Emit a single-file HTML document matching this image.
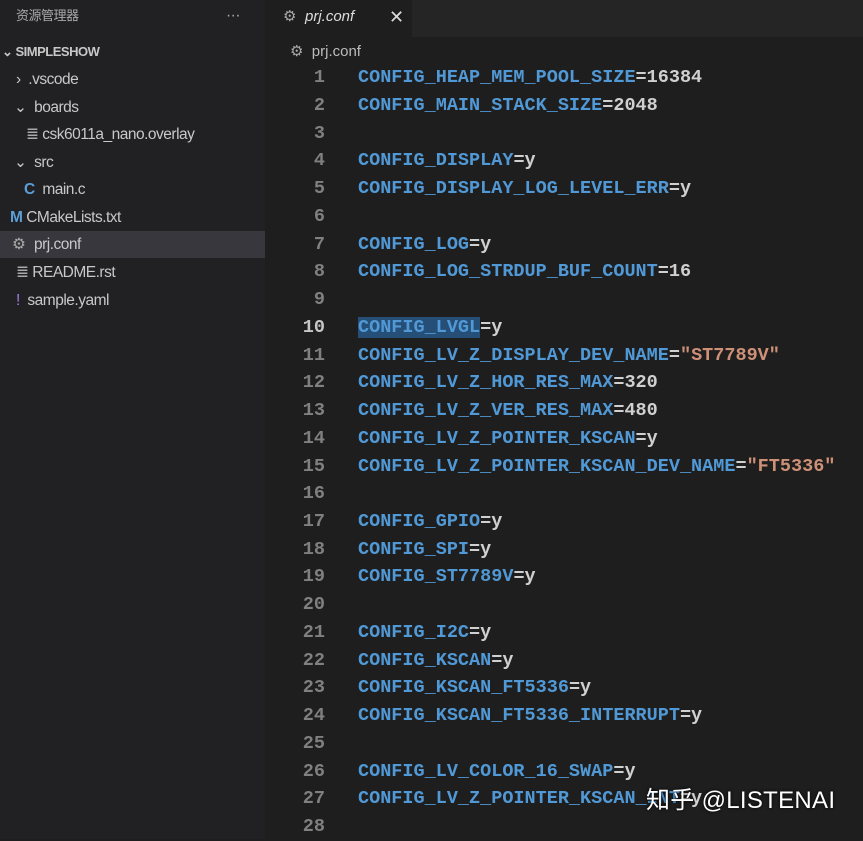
<!DOCTYPE html><html><head><meta charset="utf-8"><style>
body{margin:0;width:863px;height:839px;background:#1e1e1e;overflow:hidden;font-family:"Liberation Sans","Noto Sans CJK SC",sans-serif;position:relative}
#side{position:absolute;left:0;top:0;width:265px;height:839px;background:#212123}
.s{position:absolute;left:0;width:265px;height:27px;line-height:27px;color:#c8c8c8;font-size:15.5px;letter-spacing:-0.5px;white-space:nowrap}
#tabs{position:absolute;left:265px;top:0;width:598px;height:37px;background:#252526}
#tab{position:absolute;left:265px;top:0;width:147px;height:37px;background:#1e1e1e;color:#ddd;font-style:italic;font-size:15px;line-height:34px}
.l{position:absolute;left:280px;height:28px;line-height:28px;font-family:"Liberation Mono",monospace;font-size:18.5px;white-space:pre;color:#d0d0d0;font-weight:bold}
.n{display:inline-block;width:45px;text-align:right;color:#808080;margin-right:33px}
.k{color:#5199d6}.v{color:#ce9178}
</style></head><body>
<div id="side">
<div class="s" style="top:2px;left:16px;font-size:13px;color:#aaa">资源管理器</div>
<div class="s" style="top:2px;left:226px;color:#aaa">···</div>
<div class="s" style="top:38px;left:2px;font-weight:bold;font-size:13px">⌄ SIMPLESHOW</div>
<div class="s" style="top:66px;left:16px">›&nbsp; .vscode</div>
<div class="s" style="top:94px;left:14px">⌄&nbsp; boards</div>
<div class="s" style="top:121px;left:26px"><span style="color:#aaa">≣</span> csk6011a_nano.overlay</div>
<div class="s" style="top:149px;left:14px">⌄&nbsp; src</div>
<div class="s" style="top:176px;left:24px"><b style="color:#5a9fd8">C</b>&nbsp; main.c</div>
<div class="s" style="top:204px;left:10px"><b style="color:#5a9fd8">M</b> CMakeLists.txt</div>
<div class="s" style="top:231px;background:#37373d"><span style="position:absolute;left:12px;color:#aaa">⚙</span><span style="position:absolute;left:34px">prj.conf</span></div>
<div class="s" style="top:259px;left:16px"><span style="color:#aaa">≣</span> README.rst</div>
<div class="s" style="top:287px;left:16px"><span style="color:#a07de0">!</span>&nbsp; sample.yaml</div>
</div>
<div id="tabs"></div>
<div id="tab"><span style="position:absolute;left:18px;font-style:normal;color:#aaa">⚙</span><span style="position:absolute;left:40px">prj.conf</span><span style="position:absolute;left:124px;font-style:normal;font-size:18px">✕</span></div>
<div style="position:absolute;left:290px;top:40px;color:#bbb;font-size:15px;line-height:24px"><span style="color:#aaa">⚙</span>&nbsp; prj.conf</div>
<div id="code">
<div class="l" style="top:64px"><span class="n">1</span><span class="k">CONFIG_HEAP_MEM_POOL_SIZE</span>=16384</div>
<div class="l" style="top:92px"><span class="n">2</span><span class="k">CONFIG_MAIN_STACK_SIZE</span>=2048</div>
<div class="l" style="top:120px"><span class="n">3</span></div>
<div class="l" style="top:147px"><span class="n">4</span><span class="k">CONFIG_DISPLAY</span>=y</div>
<div class="l" style="top:175px"><span class="n">5</span><span class="k">CONFIG_DISPLAY_LOG_LEVEL_ERR</span>=y</div>
<div class="l" style="top:203px"><span class="n">6</span></div>
<div class="l" style="top:231px"><span class="n">7</span><span class="k">CONFIG_LOG</span>=y</div>
<div class="l" style="top:258px"><span class="n">8</span><span class="k">CONFIG_LOG_STRDUP_BUF_COUNT</span>=16</div>
<div class="l" style="top:286px"><span class="n">9</span></div>
<div class="l" style="top:314px"><span class="n" style="color:#c6c6c6">10</span><span class="k" style="background:#264f78">CONFIG_LVGL</span>=y</div>
<div class="l" style="top:342px"><span class="n">11</span><span class="k">CONFIG_LV_Z_DISPLAY_DEV_NAME</span>=<span class="v">"ST7789V"</span></div>
<div class="l" style="top:369px"><span class="n">12</span><span class="k">CONFIG_LV_Z_HOR_RES_MAX</span>=320</div>
<div class="l" style="top:397px"><span class="n">13</span><span class="k">CONFIG_LV_Z_VER_RES_MAX</span>=480</div>
<div class="l" style="top:425px"><span class="n">14</span><span class="k">CONFIG_LV_Z_POINTER_KSCAN</span>=y</div>
<div class="l" style="top:453px"><span class="n">15</span><span class="k">CONFIG_LV_Z_POINTER_KSCAN_DEV_NAME</span>=<span class="v">"FT5336"</span></div>
<div class="l" style="top:480px"><span class="n">16</span></div>
<div class="l" style="top:508px"><span class="n">17</span><span class="k">CONFIG_GPIO</span>=y</div>
<div class="l" style="top:536px"><span class="n">18</span><span class="k">CONFIG_SPI</span>=y</div>
<div class="l" style="top:563px"><span class="n">19</span><span class="k">CONFIG_ST7789V</span>=y</div>
<div class="l" style="top:591px"><span class="n">20</span></div>
<div class="l" style="top:619px"><span class="n">21</span><span class="k">CONFIG_I2C</span>=y</div>
<div class="l" style="top:647px"><span class="n">22</span><span class="k">CONFIG_KSCAN</span>=y</div>
<div class="l" style="top:674px"><span class="n">23</span><span class="k">CONFIG_KSCAN_FT5336</span>=y</div>
<div class="l" style="top:702px"><span class="n">24</span><span class="k">CONFIG_KSCAN_FT5336_INTERRUPT</span>=y</div>
<div class="l" style="top:730px"><span class="n">25</span></div>
<div class="l" style="top:758px"><span class="n">26</span><span class="k">CONFIG_LV_COLOR_16_SWAP</span>=y</div>
<div class="l" style="top:785px"><span class="n">27</span><span class="k">CONFIG_LV_Z_POINTER_KSCAN_INT</span>=y</div>
<div class="l" style="top:813px"><span class="n">28</span></div>
</div>
<div style="position:absolute;left:646px;top:785px;color:#fff;font-size:24px;line-height:32px;letter-spacing:0.3px;text-shadow:0 0 3px #000">知乎 @LISTENAI</div>
</body></html>
